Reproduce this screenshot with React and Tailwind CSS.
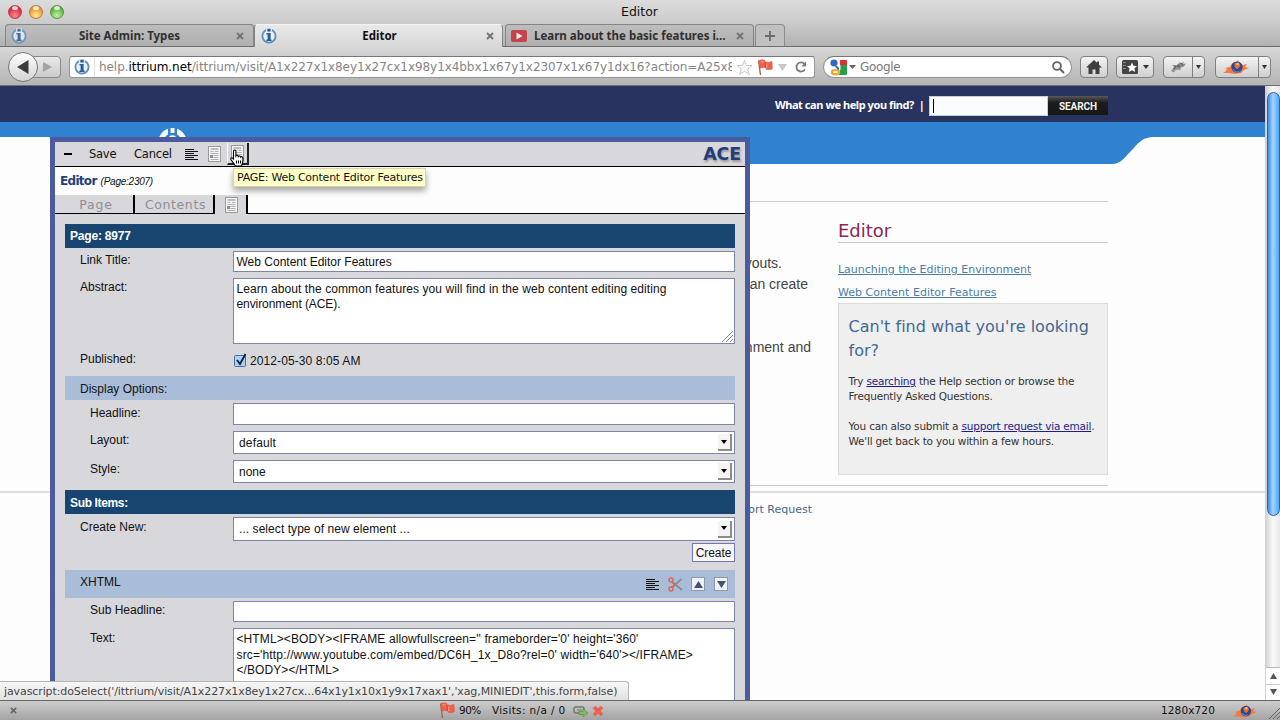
import React from "react";

const lucida = "font-['DejaVu_Sans',sans-serif]";
const verdana = "font-['DejaVu_Sans',sans-serif]";
const helvetica = "font-['Liberation_Sans',Arial,sans-serif]";

function SiteIcon({ className = "" }) {
  return (
    <svg className={"shrink-0 " + className} width="16" height="16" viewBox="0 0 16 16">
      <circle cx="8" cy="8" r="6.600" fill="#e8f1f8" stroke="#5b8fb8" strokeWidth="1.800" />
      <rect x="5" y="0" width="6" height="3" fill="#d8e4ee" />
      <rect x="6.400" y="0.800" width="3.200" height="2.800" fill="#2c5a96" />
      <path d="M5.400 5h4.200v6.600h1v1.400H5.400v-1.400h1.200V6.400H5.400z" fill="#2c5a96" />
    </svg>
  );
}

function Flag() {
  return (
    <svg className="shrink-0" width="16" height="17" viewBox="0 0 16 17">
      <path d="M1.500 1.500L3.500 16" stroke="#9a6a5c" strokeWidth="1.400" />
      <path d="M2 1.500c2-1 4-.8 6 0V3c2-.2 3 .6 4.500.2.800-.2 1.500-.8 2.500-.8l.4 7.500c-2.500 1-4.500.8-6.400.3V8.800c-2-.6-4-.3-6 .2z" fill="#f0604b" stroke="#d4543f" strokeWidth=".5" />
      <path d="M3.600 3c1.200-.5 2-.4 3-.1M9.800 4.500v4.500" stroke="#f9a796" strokeWidth="1" fill="none" />
      <path d="M8.200 3v5.800" stroke="#c04532" strokeWidth=".8" />
    </svg>
  );
}

function Fireball({ width = 26 }) {
  return (
    <svg className="shrink-0" width={width} height="16" viewBox="0 0 26 16">
      <path d="M0 14c2-1 3-2 4-4l-2-1 5-1c1-3 3-5 6-5l2-2 1 3 4 2 4-1-2 3 4 1-5 2-3 3-6 1-6-1z" fill="#f47a3c" />
      <circle cx="14" cy="8" r="5.600" fill="#25479c" />
      <path d="M10 10c1 2.500 4 3.500 6.500 2" stroke="#5f93e0" strokeWidth="1" fill="none" />
      <path d="M11.500 4.500c2-1.500 5-1 5.500 1 .3 2-1.500 4.500-3 4.500s-3-3-2.500-5.500z" fill="#ef6b2c" />
      <circle cx="14.500" cy="5" r="1.300" fill="#ffc05a" />
    </svg>
  );
}

function DocIcon() {
  return (
    <svg className="shrink-0" width="14" height="16" viewBox="0 0 14 16">
      <rect x=".5" y=".5" width="12" height="15" fill="#f4f4f4" stroke="#9a9a9e" />
      <path d="M2.500 3h8" stroke="#86868a" />
      <path d="M2.500 5.500h3M7 5.500h3.500M2.500 7.500h8M5.500 9.500h5M5.500 11.500h5M2.500 13.500h8" stroke="#b0b0b2" />
      <rect x="2" y="9" width="3" height="3" fill="#8f8f92" />
    </svg>
  );
}

function LinesIcon() {
  return (
    <svg className="shrink-0" width="14" height="11" viewBox="0 0 14 11">
      <path d="M0 .5h9M0 2.500h13M0 4.500h9M0 6.500h13M0 8.500h9M0 10.500h13" stroke="#111" />
    </svg>
  );
}

function Cross({ size = 8, color = "#747474" }) {
  return (
    <svg className="shrink-0" width={size} height={size} viewBox="0 0 8 8">
      <path d="M1 1l6 6M7 1L1 7" stroke={color} strokeWidth="1.900" />
    </svg>
  );
}

function Down({ w = 6, h = 4, color = "#333" }) {
  return (
    <svg className="shrink-0" width={w} height={h} viewBox="0 0 6 4" preserveAspectRatio="none">
      <path d="M0 0h6L3 4z" fill={color} />
    </svg>
  );
}

function Light({ className }) {
  return (
    <span className={"relative h-[14px] w-[14px] overflow-hidden rounded-full border " + className}>
      <span className="absolute left-[3px] top-0 h-[4px] w-[6px] rounded-full bg-white/80" />
    </span>
  );
}

function Chrome() {
  return (
    <header className={"shrink-0 " + lucida}>
      <div className="flex h-[24px] items-center bg-gradient-to-b from-[#dcdcdc] to-[#cacaca] pl-[8px]">
        <div className="flex w-[76px] gap-[7px] pb-px">
          <Light className="border-[#b0414a] bg-[radial-gradient(circle_at_50%_80%,#ff8b8b,#d92440_70%)]" />
          <Light className="border-[#b87a3c] bg-[radial-gradient(circle_at_50%_80%,#ffee8a,#f08a2c_75%)]" />
          <Light className="border-[#55923f] bg-[radial-gradient(circle_at_50%_80%,#c4f59a,#52a83e_75%)]" />
        </div>
        <div className="flex-1 pr-[85px] text-center text-[12.500px] leading-[22px] text-[#111]">Editor</div>
      </div>
      <div className="flex h-[23px] border-b border-[#6c6c6c] bg-gradient-to-b from-[#c9c9c9] to-[#b2b2b2] font-['Noto_Sans','DejaVu_Sans',sans-serif] text-[11.500px] font-bold">
        <div className="ml-[5px] flex w-[249px] items-center rounded-t-[4px] border-x border-t border-[#858585] bg-gradient-to-b from-[#bdbdbd] to-[#b0b0b0] pl-[5px] pr-[9px]">
          <SiteIcon className="opacity-80" />
          <span className="flex-1 pr-[4px] text-center text-[#303030]">Site Admin: Types</span>
          <Cross />
        </div>
        <div className="z-10 -mb-px flex w-[249px] items-center rounded-t-[4px] border-x border-t border-[#858585] border-t-[#f4f4f4] bg-gradient-to-b from-[#e9e9e9] to-[#d8d8d8] pl-[6px] pr-[8px]">
          <SiteIcon />
          <span className="flex-1 pr-[4px] text-center text-[#111]">Editor</span>
          <Cross />
        </div>
        <div className="ml-[2px] flex w-[249px] items-center rounded-t-[4px] border-x border-t border-[#858585] bg-gradient-to-b from-[#bdbdbd] to-[#b0b0b0] pl-[5px] pr-[9px]">
          <svg className="shrink-0" width="16" height="12" viewBox="0 0 16 12"><rect width="16" height="12" rx="2" fill="#c2444c" /><path d="M5.500 2.500v7l6-3.500z" fill="#f5e6e6" /></svg>
          <span className="w-[209px] shrink-0 whitespace-nowrap pl-[7px] text-[#303030]">Learn about the basic features i...</span>
          <Cross />
        </div>
        <div className="ml-px flex w-[30px] items-center justify-center rounded-t-[4px] border-x border-t border-[#8d8d8d] bg-[#c0c0c0]">
          <svg width="10" height="10" viewBox="0 0 10 10"><path d="M5 0v10M0 5h10" stroke="#6a6a6a" strokeWidth="1.800" /></svg>
        </div>
      </div>
      <div className="flex h-[39px] items-center border-b border-[#6d6d72] bg-gradient-to-b from-[#d8d8d8] to-[#b4b4b4] pl-[8px] pr-[9px] pt-[2px]">
        <div className="z-10 flex h-[30px] w-[30px] items-center justify-center rounded-full border border-[#777] bg-gradient-to-b from-white to-[#d4d4d4]">
          <svg width="12" height="14" viewBox="0 0 12 14"><path d="M11.500 0v14L0 7z" fill="#3c3c3c" /></svg>
        </div>
        <div className="-ml-[6px] flex h-[22px] w-[29px] items-center justify-center rounded-r-[4px] border border-[#8a8a8a] bg-gradient-to-b from-[#eaeaea] to-[#cbcbcb] pl-[2px]">
          <svg width="9" height="10" viewBox="0 0 9 10"><path d="M0 0v10l9-5z" fill="#a3a3a3" /></svg>
        </div>
        <div className="ml-[8px] flex h-[22px] w-[746px] items-center rounded-[3px] border border-[#979797] border-t-[#777] bg-white pl-[4px] pr-[7px]">
          <SiteIcon />
          <span className="ml-[4px] h-[20px] w-px bg-[#e2e2e2]" />
          <span className="ml-[4px] w-[633px] overflow-hidden whitespace-nowrap text-[12px] tracking-[-0.060px] text-[#858585]">
            help.<span className="text-black">ittrium.net</span>/ittrium/visit/A1x227x1x8ey1x27cx1x98y1x4bbx1x67y1x2307x1x67y1dx16?action=A25x8
          </span>
          <svg className="ml-[4px] shrink-0" width="17" height="17" viewBox="0 0 17 17"><path d="M8.500 1.500l2 5h5.500l-4.300 3.400 1.600 5.600-4.800-3.300-4.800 3.300 1.600-5.600L1 6.500h5.500z" fill="#f6f6f6" stroke="#b8b8b8" strokeDasharray="1.500 .6" /></svg>
          <span className="ml-[4px]"><Flag /></span>
          <span className="ml-[5px]"><Down w={9} h={7} color="#c6c6c6" /></span>
          <svg className="ml-[8px] shrink-0" width="12" height="12" viewBox="0 0 12 12"><path d="M9.800 3.300A4.600 4.600 0 1 0 10 8.300" fill="none" stroke="#7b7b7b" strokeWidth="1.800" /><path d="M11 .5v5H6.300z" fill="#7b7b7b" /></svg>
        </div>
        <div className="ml-[8px] flex h-[22px] w-[249px] items-center rounded-full border border-[#979797] border-t-[#777] bg-white pl-[5px] pr-[6px]">
          <svg width="18" height="17" viewBox="0 0 18 17">
            <path d="M9 1h8a1 1 0 0 1 1 1v6h-8z" fill="#e0302c" /><path d="M10 6h8v9a1 1 0 0 1-1 1h-7z" fill="#25a04a" />
            <path d="M8 0h3.500c-1 2.500-1 4.500 0 7v3L9.500 16H8z" fill="#fff" />
            <ellipse cx="5" cy="4" rx="3.600" ry="3.400" fill="#3266c4" />
            <path d="M6.500 7.500c3 .5 3 3 1.500 3.800" fill="none" stroke="#3266c4" strokeWidth="2.200" /><ellipse cx="6.500" cy="13.200" rx="3.600" ry="2.200" fill="#fff" stroke="#f2a52a" strokeWidth="2.200" />
          </svg>
          <span className="ml-[2px]"><Down w={7} h={4} color="#666" /></span>
          <span className="ml-[4px] flex-1 text-[12px] tracking-[-0.350px] text-[#777]">Google</span>
          <svg width="13" height="13" viewBox="0 0 13 13"><circle cx="5" cy="5" r="3.900" fill="none" stroke="#666" strokeWidth="1.900" /><path d="M8 8l4 4" stroke="#666" strokeWidth="2.200" /></svg>
        </div>
        <div className="ml-[8px] flex h-[22px] w-[28px] items-center justify-center rounded-[4px] border border-[#808080] bg-gradient-to-b from-[#f4f4f4] to-[#cfcfcf]">
          <svg width="16" height="14" viewBox="0 0 16 14"><path d="M8 0L0 7.500h2.500V14h4V9.500h3V14h4V7.500H16L13 4.700V1.500h-2v1.300z" fill="#3f3f3f" /></svg>
        </div>
        <div className="ml-[8px] flex h-[22px] w-[38px] items-center justify-center gap-[4px] rounded-[4px] border border-[#808080] bg-gradient-to-b from-[#f4f4f4] to-[#cfcfcf]">
          <svg width="17" height="14" viewBox="0 0 17 14"><rect width="16" height="14" rx="1.500" fill="#444" /><path d="M1 2h3v1H1zM1 5h3v1H1zM1 8h3v1H1z" fill="#888" /><path d="M10 2.500l1.500 3.200 3.500.4-2.600 2.300.8 3.600-3.200-1.800L6.800 12l.8-3.600L5 6.100l3.500-.4z" fill="#fff" /></svg>
          <Down w={6} h={4} />
        </div>
        <div className="ml-[9px] flex h-[22px] w-[42px] items-center rounded-[4px] border border-[#808080] bg-gradient-to-b from-[#f4f4f4] to-[#cfcfcf]">
          <span className="flex w-[28px] justify-center">
            <svg width="15" height="12" viewBox="0 0 15 12"><path d="M0 10l3-4L1 4l5 0 3-3 1 1 3-1-1 2 3-.5-2 3-3 1-1 3-2-1-3 1-1 2z" fill="#8f8f8f" /><circle cx="7.500" cy="5" r="1.500" fill="#666" /><path d="M10 2l2 3M3 8l2-3" stroke="#555" /></svg>
          </span>
          <span className="flex h-full flex-1 items-center justify-center border-l border-[#808080]"><Down w={5} h={4} /></span>
        </div>
        <div className="ml-[10px] flex h-[22px] w-[56px] items-center rounded-[4px] border border-[#808080] bg-gradient-to-b from-[#f4f4f4] to-[#cfcfcf]">
          <span className="flex w-[42px] justify-center pr-[2px]"><Fireball /></span>
          <span className="flex h-full flex-1 items-center justify-center border-l border-[#808080]"><Down w={5} h={4} /></span>
        </div>
      </div>
    </header>
  );
}

function HelpPage() {
  return (
    <main className={"flex w-[1265px] flex-col bg-[#fdfdfd] " + verdana}>
      <div className="flex h-[36px] shrink-0 items-center bg-[#28345f] pl-[775px] pt-[3px]">
        <span className="w-[154px] whitespace-nowrap font-['Noto_Sans',sans-serif] text-[11px] font-bold tracking-[-0.430px] text-white">What can we help you find? &nbsp;|</span>
        <div className="flex h-[20px] w-[119px] items-center border border-[#c8cfdd] bg-[#fbfcfe] pl-[3px]"><span className="h-[14px] w-px bg-black" /></div>
        <div className="flex h-[19px] w-[60px] items-center justify-center bg-gradient-to-b from-[#5a5a5a] via-[#1c1c1c] via-35% to-[#171717] pt-px font-['Roboto','Liberation_Sans',sans-serif] text-[10px] font-bold tracking-[-0.100px] text-[#f4f4f4]">SEARCH</div>
      </div>
      <svg className="shrink-0" width="1265" height="42" viewBox="0 0 1265 42">
        <path d="M0 0h1265v15h-110c-14 0-17 7-24 14-6 6-10 13-19 13H100c-10 0-20-27-40-27H0z" fill="#3081d0" />
        <circle cx="172.500" cy="20" r="11.500" fill="none" stroke="#f4faff" strokeWidth="5" />
        <path d="M168 0h9v14h-9z" fill="#3081d0" />
        <path d="M170.500 6h4v5h-4zM169.500 14c2-1 4-1 6 0v1h-6z" fill="#fff" />
      </svg>
      <div className="ml-[160px] mt-[37px] flex h-[285px] w-[948px] shrink-0 border-y border-[#c9cccf]">
        <div className={"flex w-[678px] shrink-0 flex-col items-start text-[14px] leading-[21px] text-[#444] " + helvetica}>
          <p className="mt-[51px] w-[622px] text-right">layouts.</p>
          <p className="w-[648px] text-right">can create</p>
          <p className="mt-[42px] w-[651px] text-right">ronment and</p>
        </div>
        <aside className="flex w-[270px] flex-col">
          <h2 className="mt-[17px] h-[24px] border-b border-[#c9cccf] text-[18px] leading-[24px] text-[#8e2757]">Editor</h2>
          <a className="mt-[18px] h-[23px] text-[11px] leading-[18px] tracking-[-0.020px] text-[#4a7da5] underline underline-offset-1">Launching the Editing Environment</a>
          <a className="h-[19px] text-[11px] leading-[18px] tracking-[0.020px] text-[#4a7da5] underline underline-offset-1">Web Content Editor Features</a>
          <div className="h-[172px] border border-[#dcdcdc] bg-[#efefef] pl-[9.500px] text-[10.500px] leading-[15px] text-[#333]">
            <h3 className="mt-[11px] text-[16px] leading-[24px] tracking-[0.020px] text-[#44698f]">Can't find what you're looking<br />for?</h3>
            <p className="mt-[11px] whitespace-nowrap tracking-[-0.200px]">Try <a className="text-[#1d1d8c] underline">searching</a> the Help section or browse the<br />Frequently Asked Questions.</p>
            <p className="mt-[15px] whitespace-nowrap tracking-[-0.200px]">You can also submit a <a className="text-[#1d1d8c] underline">support request via email</a>.<br />We'll get back to you within a few hours.</p>
          </div>
        </aside>
      </div>
      <footer className="mt-[5px] flex-1 border-t-2 border-[#dedede] pt-[8px]">
        <div className="w-[812px] text-right text-[11px] leading-[18px] text-[#44698f]">port Request</div>
      </footer>
    </main>
  );
}

function Scrollbar() {
  return (
    <div className="flex w-[15px] flex-col border-l border-[#d0d0d0] bg-gradient-to-r from-[#d4d4d4] via-[#fafafa] to-[#e8e8e8]">
      <div className="mx-[0.500px] mt-[6px] h-[424px] shrink-0 rounded-full border border-[#2e62b4] bg-gradient-to-r from-[#3d8ae0] via-[#a4d4fa] via-45% to-[#4aa8f4]" />
      <div className="flex-1" />
      <div className="flex h-[33px] flex-col border-t border-[#bbb] bg-white">
        <div className="flex flex-1 items-center justify-center border-b border-[#ccc]"><svg width="7" height="6" viewBox="0 0 7 6"><path d="M0 6h7L3.500 0z" fill="#555" /></svg></div>
        <div className="flex flex-1 items-center justify-center"><Down w={7} h={6} color="#555" /></div>
      </div>
    </div>
  );
}

function Row({ className, label, indent = "pl-[15px]", children }) {
  return (
    <div className={"flex shrink-0 " + className}>
      <div className={"w-[168px] shrink-0 leading-[14px] " + indent}>{label}</div>
      {children}
    </div>
  );
}

function Select({ className, children }) {
  return (
    <div className={"flex w-[502px] items-center border border-[#7b86a8] bg-white pl-[5px] pr-[2px] " + className}>
      <span className="flex-1">{children}</span>
      <span className="flex h-[17px] w-[14px] items-center justify-center border-b-2 border-r-2 border-[#8c8c8c] bg-[#f4f4f4]"><Down w={6} h={4} color="#000" /></span>
    </div>
  );
}

const field = "w-[502px] border border-[#7b86a8] bg-white ";

function EditorPanel() {
  return (
    <section className={"absolute left-[50px] top-[51px] flex h-[563px] w-[700px] flex-col overflow-hidden border-x-[5px] border-t-[5px] border-[#4a5b9e] bg-[#d7d7dc] text-[12px] text-[#111] " + helvetica}>
      <div className={"flex h-[25px] shrink-0 items-center border-b border-black bg-[#d7d7dc] text-[11.500px] " + lucida}>
        <span className="ml-[9px] h-[2px] w-[8px] bg-black" />
        <span className="ml-[17px] w-[45px] pt-px tracking-[-0.250px]">Save</span>
        <span className="w-[51px] pt-px tracking-[-0.180px]">Cancel</span>
        <LinesIcon />
        <span className="ml-[9px]"><DocIcon /></span>
        <span className="ml-[5px] flex h-[22px] w-[22px] items-center justify-center border-b-2 border-l border-r-2 border-[#222] border-l-white"><DocIcon /></span>
        <span className="ml-auto pr-[4px] text-[17.500px] font-bold leading-[22px] tracking-[-0.200px] text-[#243c78] [text-shadow:1px_2px_2px_#999]">ACE</span>
      </div>
      <div className="h-[28px] shrink-0 bg-[#fdfdfd] pl-[5px] leading-[28px]">
        <span className="font-['DejaVu_Sans',sans-serif] text-[12px] font-bold tracking-[-0.700px] text-[#24407c]">Editor</span>
        <span className="ml-[4px] text-[10px] italic tracking-[-0.250px]">(Page:2307)</span>
      </div>
      <div className="flex h-[19px] shrink-0 border-b border-black bg-[#fdfdfd] font-['DejaVu_Sans',sans-serif] text-[12.500px] text-[#8f8f92]">
        <div className="flex w-[80px] items-center justify-center border-r-2 border-black bg-[#d7d7dc] pl-[4px] pt-[2px] tracking-[0.800px]">Page</div>
        <div className="flex w-[80px] items-center justify-center border-r-2 border-black bg-[#d7d7dc] pl-[3px] pt-[2px] tracking-[0.600px]">Contents</div>
        <div className="-mb-px flex w-[33px] items-center justify-center border-r-2 border-black bg-[#d7d7dc] pl-[2px]"><DocIcon /></div>
      </div>
      <div className="flex flex-1 flex-col px-[10px] pt-[10px]">
        <div className="flex h-[24px] shrink-0 items-center bg-[#18456f] pl-[5px] font-bold tracking-[-0.200px] text-white">Page: 8977</div>
        <Row className="h-[30px] pt-[3px]" label={<div className="pt-[2px]">Link Title:</div>}>
          <div className={field + "h-[21px] pl-[2.500px] leading-[20px]"}>Web Content Editor Features</div>
        </Row>
        <Row className="h-[72px]" label={<div className="pt-[2px]">Abstract:</div>}>
          <div className={field + "relative h-[66px] pl-[2.500px] pt-[3px] leading-[15px] tracking-[0.080px]"}>
            Learn about the common features you will find in the web content editing editing<br /><span className="tracking-[-0.080px]">environment (ACE).</span>
            <svg className="absolute bottom-px right-px" width="12" height="12" viewBox="0 0 12 12"><path d="M1 12L12 1M5 12l7-7M9 12l3-3" stroke="#8a8a8a" /></svg>
          </div>
        </Row>
        <Row className="h-[26px]" label={<div className="pt-[2px]">Published:</div>}>
          <div className="flex h-[21px] items-center">
            <svg width="15" height="15" viewBox="0 0 15 15"><rect x="1.500" y="2.500" width="11" height="11" rx="1" fill="#a8d3f4" stroke="#4a6f9e" /><path d="M4 7l3 4 5.500-10" fill="none" stroke="#17233c" strokeWidth="1.900" /></svg>
            <span className="ml-[2px] tracking-[0.100px]">2012-05-30 8:05 AM</span>
          </div>
        </Row>
        <div className="flex h-[24px] shrink-0 items-center bg-[#a9bdd8] pl-[15px] pt-[2px]">Display Options:</div>
        <Row className="h-[31px] pt-[3px]" indent="pl-[25px]" label={<div className="pt-[3px]">Headline:</div>}>
          <div className={field + "h-[22px]"} />
        </Row>
        <Row className="h-[29px]" indent="pl-[25px]" label={<div className="pt-[2px]">Layout:</div>}>
          <Select className="h-[23px]"><span className="tracking-[0.150px]">default</span></Select>
        </Row>
        <Row className="h-[30px]" indent="pl-[25px]" label={<div className="pt-[2px]">Style:</div>}>
          <Select className="h-[23px]">none</Select>
        </Row>
        <div className="flex h-[24px] shrink-0 items-center bg-[#18456f] pl-[5px] pt-px font-bold tracking-[-0.350px] text-white">Sub Items:</div>
        <Row className="h-[29px] pt-[3px]" label={<div className="pt-[3px]">Create New:</div>}>
          <Select className="h-[24px]"><span className="tracking-[0.060px]">... select type of new element ...</span></Select>
        </Row>
        <div className="flex h-[27px] shrink-0 items-start justify-end">
          <div className="h-[19px] w-[43px] border border-[#6f76b0] bg-[#f7f7fc] text-center leading-[18px] tracking-[-0.100px]">Create</div>
        </div>
        <div className="flex h-[28px] shrink-0 items-center bg-[#a9bdd8] pl-[15px] pr-[7px]">
          <span className="flex-1 pb-[4px]">XHTML</span>
          <LinesIcon />
          <svg className="ml-[8px]" width="15" height="15" viewBox="0 0 15 15">
            <path d="M5 5.500L14 13M5 9.500L13.500 2" stroke="#8a8f96" strokeWidth="2" />
            <circle cx="3" cy="3" r="2" fill="none" stroke="#d66a55" strokeWidth="1.500" /><circle cx="3" cy="12" r="2" fill="none" stroke="#d66a55" strokeWidth="1.500" /><path d="M4 5l3 3M4 10.500l3-3" stroke="#d66a55" strokeWidth="1.600" />
          </svg>
          <span className="ml-[8px] flex h-[14px] w-[14px] items-center justify-center border border-[#8d97ae] bg-[#eef2f8]"><svg width="9" height="7" viewBox="0 0 9 7"><path d="M0 7h9L4.500 0z" fill="#45526e" /></svg></span>
          <span className="ml-[9px] flex h-[14px] w-[14px] items-center justify-center border border-[#8d97ae] bg-[#eef2f8]"><Down w={9} h={7} color="#45526e" /></span>
        </div>
        <Row className="h-[30px] pt-[3px]" indent="pl-[25px]" label={<div className="pt-[2px]">Sub Headline:</div>}>
          <div className={field + "h-[21px]"} />
        </Row>
        <Row className="h-[80px]" indent="pl-[25px]" label={<div className="pt-[3px]">Text:</div>}>
          <div className={field + "pl-[2.500px] pt-[3px] leading-[15.500px]"}>
            <div className="tracking-[0.100px]">{"<HTML><BODY><IFRAME allowfullscreen='' frameborder='0' height='360'"}</div>
            <div className="tracking-[0.150px]">{"src='http://www.youtube.com/embed/DC6H_1x_D8o?rel=0' width='640'></IFRAME>"}</div>
            <div className="tracking-[0.080px]">{"</BODY></HTML>"}</div>
          </div>
        </Row>
      </div>
    </section>
  );
}

function StatusBar() {
  return (
    <footer className={"flex h-[20px] shrink-0 items-center border-t border-[#666] bg-gradient-to-b from-[#cdcdcd] to-[#a4a4a4] pl-[10px] text-[10.500px] text-[#111] " + lucida}>
      <Cross size={7} color="#666" />
      <span className="ml-[422px] flex"><Flag /></span>
      <span className="ml-[4px] w-[33px] tracking-[-0.500px]">90%</span>
      <span className="w-[80px] whitespace-nowrap tracking-[0.350px]">Visits: n/a / 0</span>
      <svg className="ml-px" width="16" height="12" viewBox="0 0 16 12"><rect x="1" y="2" width="10" height="6" rx="2" fill="none" stroke="#6f7a6c" strokeWidth="1.500" /><path d="M4 5h5" stroke="#6f7a6c" /><path d="M6 6.500h4V4l5 4-5 4V9.500H6z" fill="#7fbf5a" stroke="#4f8a3c" strokeWidth=".6" /></svg>
      <svg className="ml-[3px]" width="12" height="12" viewBox="0 0 12 12"><path d="M2 2l8 8M10 2l-8 8" stroke="#f0604b" strokeWidth="3.600" /></svg>
      <span className="ml-auto w-[72px] tracking-[0.120px]">1280x720</span>
      <Fireball width={24} />
      <svg className="ml-[12px] mt-[4px]" width="11" height="14" viewBox="0 0 11 14"><path d="M0 13L11 2M4 13l7-7M8 13l3-3" stroke="#666" /></svg>
    </footer>
  );
}

export default function App() {
  return (
    <div className="flex h-[720px] w-[1280px] flex-col overflow-hidden bg-white">
      <Chrome />
      <div className="relative flex h-[614px] shrink-0 overflow-hidden">
        <HelpPage />
        <Scrollbar />
        <EditorPanel />
        <div className={"absolute left-[233px] top-[82px] h-[19px] w-[193px] whitespace-nowrap border border-[#d5d5a8] bg-[#ffffc8] pl-[3px] text-[11px] leading-[17px] tracking-[-0.250px] text-[#111] shadow-[0_4px_6px_rgba(0,0,0,0.350)] " + lucida}>PAGE: Web Content Editor Features</div>
        <svg className="absolute left-[229px] top-[63px]" width="16" height="18" viewBox="0 0 16 18">
          <path d="M4.500 10V2.200c0-1.600 2.400-1.600 2.400 0V7c.6-1 2.300-.8 2.400.4.600-.8 2.200-.5 2.300.6.700-.7 2.300-.3 2.300 1V12c0 2-1 3-1.300 5H6.200c-.5-2-2.200-3.300-4.200-6.500-.8-1.400.9-2.300 1.700-1.200z" fill="#fff" stroke="#000" strokeWidth="1.100" />
          <path d="M7.500 11.500v3M9.500 11.500v3M11.500 11.500v3" stroke="#000" />
        </svg>
        <div className={"absolute bottom-0 left-0 h-[19px] w-[629px] whitespace-nowrap rounded-tr-[3px] border-r border-t border-[#b5b5b5] bg-gradient-to-b from-[#f6f6f6] to-[#e2e2e2] pl-[4px] text-[11px] leading-[19px] tracking-[-0.100px] text-[#444] " + lucida}>{"javascript:doSelect('/ittrium/visit/A1x227x1x8ey1x27cx...64x1y1x10x1y9x17xax1','xag,MINIEDIT',this.form,false)"}</div>
      </div>
      <StatusBar />
    </div>
  );
}
